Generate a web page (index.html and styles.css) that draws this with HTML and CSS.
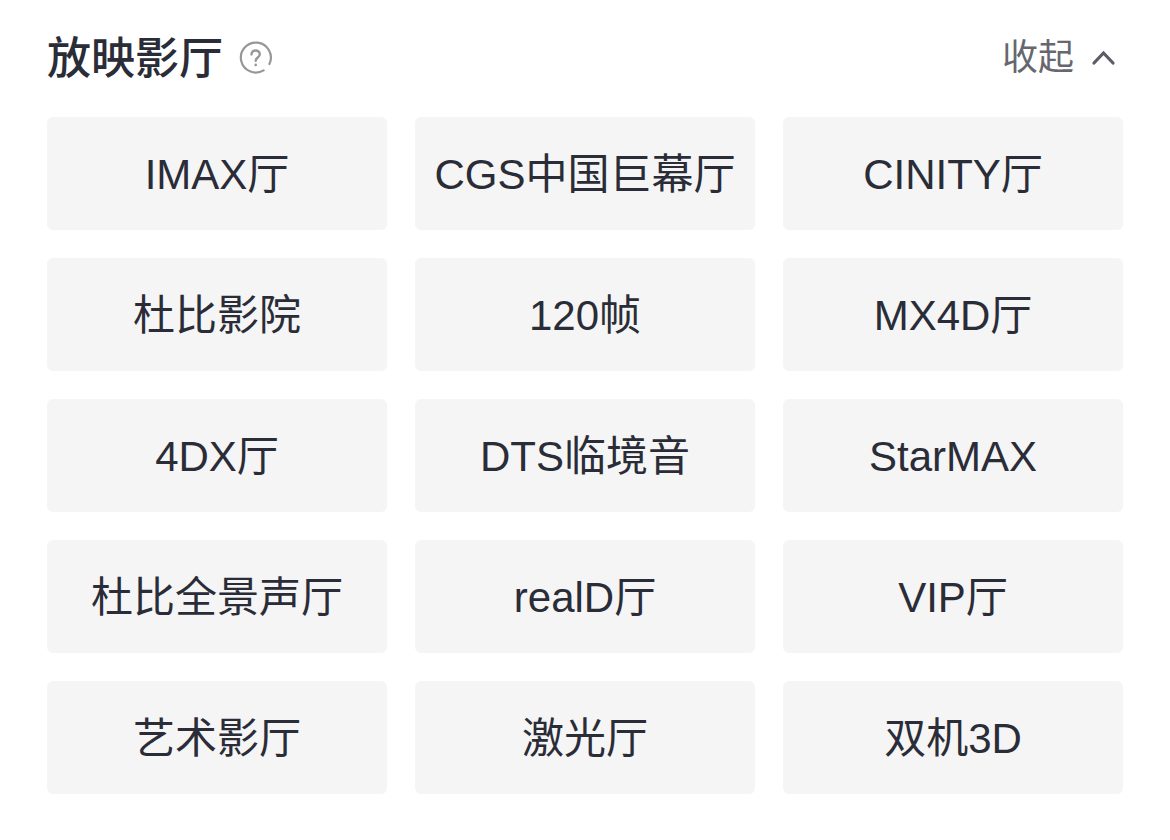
FILE: index.html
```
<!DOCTYPE html>
<html lang="zh-CN">
<head>
    <meta charset="UTF-8">
    <meta name="viewport" content="width=device-width, initial-scale=1.0">
    <title>放映影厅</title>
    <link rel="stylesheet" href="styles.css">
</head>
<body>

    <section class="hall-filter">
        <header class="filter-header">
            <h2>放映影厅</h2>
            <button type="button" class="help-btn" aria-label="影厅说明">
                <svg viewBox="0 0 34 34" width="34" height="34" fill="none" stroke="#97979a" stroke-width="2.2" stroke-linecap="round">
                    <path d="M24.600 29.400 A15 15 0 1 1 30.400 23"/>
                    <path stroke-width="2.400" d="M12.500 13.400 C12.500 8.300 20.800 8.300 20.800 13.200 C20.800 16.600 16.700 16.400 16.700 19.800"/>
                    <path stroke-width="2.600" d="M16.700 23.900 V24"/>
                </svg>
            </button>
            <button type="button" class="toggle-btn">
                收起
                <svg viewBox="0 0 26 18" width="26" height="18" fill="none" stroke="#5c5d64" stroke-width="3.2" stroke-linecap="round">
                    <path d="M4 14 L13.500 4 L23 14"/>
                </svg>
            </button>
        </header>

        <div class="hall-grid">
            <button type="button" class="hall">IMAX厅</button>
            <button type="button" class="hall">CGS中国巨幕厅</button>
            <button type="button" class="hall">CINITY厅</button>
            <button type="button" class="hall">杜比影院</button>
            <button type="button" class="hall">120帧</button>
            <button type="button" class="hall">MX4D厅</button>
            <button type="button" class="hall">4DX厅</button>
            <button type="button" class="hall">DTS临境音</button>
            <button type="button" class="hall">StarMAX</button>
            <button type="button" class="hall">杜比全景声厅</button>
            <button type="button" class="hall">realD厅</button>
            <button type="button" class="hall">VIP厅</button>
            <button type="button" class="hall">艺术影厅</button>
            <button type="button" class="hall">激光厅</button>
            <button type="button" class="hall">双机3D</button>
        </div>
    </section>

</body>
</html>
```

FILE: styles.css
```
body {
    margin: 0;
    background-color: #fff;
    color: #2a2c37;
    font-family: "Liberation Sans", "Noto Sans CJK SC", sans-serif;
}
button {
    padding: 0;
    border: none;
    background: none;
    color: inherit;
    font-family: inherit;
    cursor: pointer;
}
svg {
    display: block;
}
.hall-filter {
    padding: 28px 47px 46px;
}
.filter-header {
    display: flex;
    align-items: center;
    height: 60px;
    margin-bottom: 29px;
}
h2 {
    margin: 0;
    padding-top: 2px;
    font-size: 44px;
    font-weight: 500;
    line-height: 60px;
}
.help-btn {
    margin-left: 16px;
}
.toggle-btn {
    display: flex;
    align-items: center;
    gap: 16px;
    margin-left: auto;
    padding-right: 7px;
    color: #66676f;
    font-size: 36px;
    line-height: 60px;
}
.hall-grid {
    display: grid;
    grid-template-columns: repeat(3, 1fr);
    gap: 28px;
}
.hall {
    height: 113px;
    padding-top: 2px;
    border-radius: 6px;
    background-color: #f5f5f5;
    font-size: 42px;
    line-height: 60px;
    white-space: nowrap;
}
```
